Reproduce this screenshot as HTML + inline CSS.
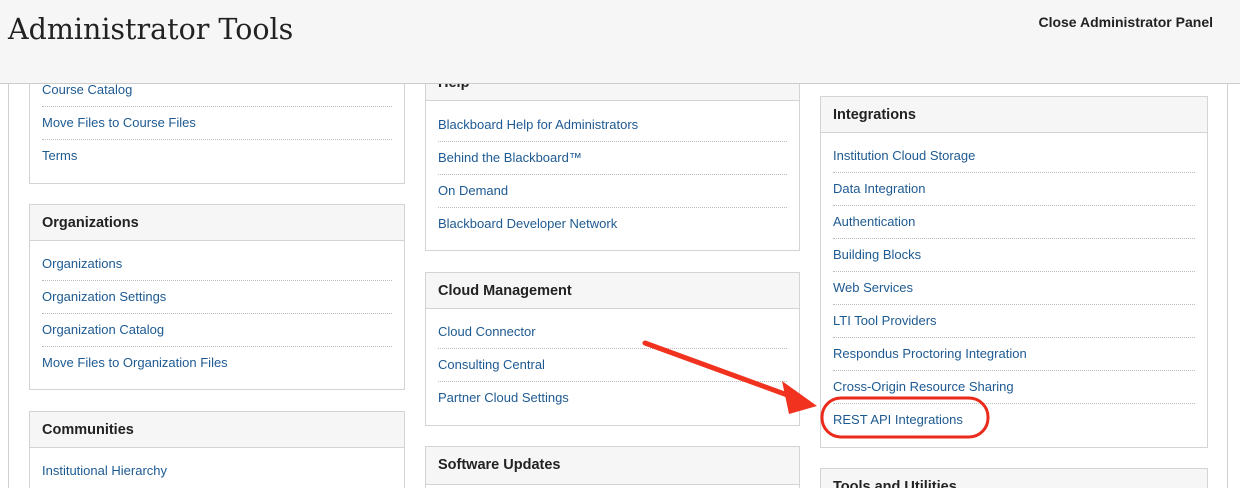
<!DOCTYPE html>
<html style="overflow:hidden;height:488px"><head><style>
body{margin:0;width:1240px;height:488px;overflow:hidden;background:#fff;font-family:"Liberation Sans",sans-serif;position:relative}
.frame{position:absolute;left:8px;top:0;width:1220px;height:488px;border-left:1px solid #d0d0d0;border-right:1px solid #d0d0d0;box-sizing:border-box}
.box{position:absolute;border:1px solid #d4d4d4;background:#fff;box-sizing:border-box}
.hd{height:36px;background:#f6f6f6;border-bottom:1px solid #d4d4d4;box-sizing:border-box;font-weight:bold;font-size:14.5px;color:#222;padding:10px 12px 0}
.box ul{list-style:none;margin:0;padding:7px 12px 0}
.box li{height:32px;line-height:32px;border-bottom:1px dotted #bbb;font-size:13px;color:#1e5a92}
.box li:last-child{border-bottom:none}
.top{position:absolute;left:0;top:0;width:1240px;height:83px;background:#f6f6f6;border-bottom:1px solid #ccc;z-index:5}
.top h1{position:absolute;left:8px;top:13px;margin:0;font-family:"DejaVu Serif","Liberation Serif",serif;font-weight:normal;font-size:28.5px;color:#222}
.top .cl{position:absolute;right:27px;top:14px;font-weight:bold;font-size:14px;color:#222}
</style></head><body>
<div class="frame"></div>
<div class="box" style="left:29px;top:40px;width:376px;height:144px"><ul style="padding-top:33px">
<li>Course Catalog</li><li>Move Files to Course Files</li><li>Terms</li></ul></div>
<div class="box" style="left:29px;top:204px;width:376px;height:186px"><div class="hd">Organizations</div><ul>
<li>Organizations</li><li>Organization Settings</li><li>Organization Catalog</li><li>Move Files to Organization Files</li></ul></div>
<div class="box" style="left:29px;top:411px;width:376px;height:77px;border-bottom:none"><div class="hd">Communities</div><ul>
<li>Institutional Hierarchy</li></ul></div>

<div class="box" style="left:425px;top:64px;width:375px;height:187px"><div class="hd">Help</div><ul style="padding-top:8px">
<li>Blackboard Help for Administrators</li><li>Behind the Blackboard™</li><li>On Demand</li><li>Blackboard Developer Network</li></ul></div>
<div class="box" style="left:425px;top:272px;width:375px;height:154px"><div class="hd">Cloud Management</div><ul>
<li>Cloud Connector</li><li>Consulting Central</li><li>Partner Cloud Settings</li></ul></div>
<div class="box" style="left:425px;top:446px;width:375px;height:42px;border-bottom:none"><div class="hd" style="height:38px">Software Updates</div></div>

<div class="box" style="left:820px;top:96px;width:388px;height:352px"><div class="hd">Integrations</div><ul>
<li>Institution Cloud Storage</li><li>Data Integration</li><li>Authentication</li><li>Building Blocks</li><li>Web Services</li><li>LTI Tool Providers</li><li>Respondus Proctoring Integration</li><li>Cross-Origin Resource Sharing</li><li>REST API Integrations</li></ul></div>
<div class="box" style="left:820px;top:468px;width:388px;height:20px;border-bottom:none;overflow:hidden"><div class="hd" style="border-bottom:none">Tools and Utilities</div></div>

<div class="top"><h1>Administrator Tools</h1><div class="cl">Close Administrator Panel</div></div>

<svg style="position:absolute;left:0;top:0;z-index:6" width="1240" height="488">
<line x1="645" y1="343" x2="790" y2="396" stroke="#f0321e" stroke-width="5" stroke-linecap="round"/>
<polygon points="817,406 782,381 789,414" fill="#f0321e"/>
<rect x="822" y="398" width="166" height="39" rx="19" fill="none" stroke="#ea2a1a" stroke-width="3"/>
</svg>
</body></html>
